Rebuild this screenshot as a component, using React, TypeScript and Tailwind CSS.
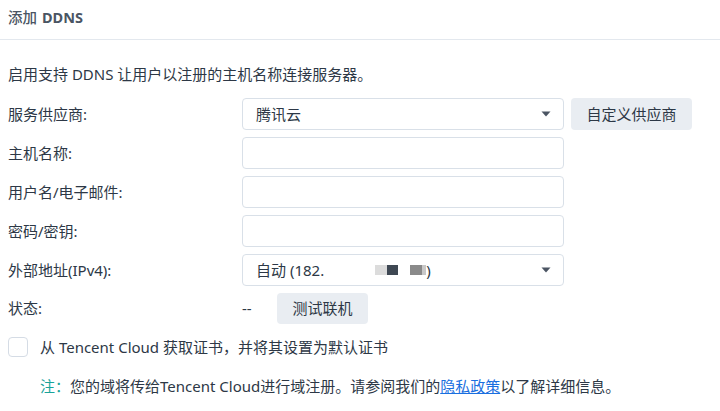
import React from "react";

const FONT = { fontFamily: '"Noto Sans", "Noto Sans CJK SC", sans-serif' };

function Caret() {
  return (
    <svg width="10" height="6" viewBox="0 0 10 6" className="shrink-0">
      <path d="M0.5 0.5 H9.5 L5 5.5 Z" fill="#4b5563" />
    </svg>
  );
}

function Input() {
  return <div className="h-[32px] w-[322px] rounded-[4px] border border-[#d9e0e8] bg-white" />;
}

function Row({ label, children }: { label: string; children: React.ReactNode }) {
  return (
    <div className="flex h-[32px] items-center">
      <div className="w-[234px] shrink-0 text-[15px] text-[#2d3846]">{label}</div>
      {children}
    </div>
  );
}

export default function App() {
  return (
    <div className="h-[411px] w-[720px] overflow-hidden bg-white text-[#2d3846]" style={FONT}>
      <div className="flex h-[40px] items-center border-b border-[#e3e8ee] px-2 pb-[3px] text-[14.5px] text-[#4a5563]">
        <span className="font-medium">添加</span>
        <span className="ml-[5px] font-bold">DDNS</span>
      </div>
      <div className="px-2">
        <div className="mt-[24px] text-[15px] leading-[20px]">启用支持 DDNS 让用户以注册的主机名称连接服务器。</div>
        <div className="mt-[14px] flex flex-col gap-[7px]">
          <Row label="服务供应商:">
            <div className="flex h-[32px] w-[322px] items-center justify-between rounded-[4px] border border-[#d9e0e8] bg-white pl-[13px] pr-[12px] text-[15px]">
              <span>腾讯云</span>
              <Caret />
            </div>
            <div className="ml-[7px] flex h-[32px] w-[121px] items-center justify-center rounded-[4px] bg-[#e9edf2] text-[15px]">
              自定义供应商
            </div>
          </Row>
          <Row label="主机名称:">
            <Input />
          </Row>
          <Row label="用户名/电子邮件:">
            <Input />
          </Row>
          <Row label="密码/密钥:">
            <Input />
          </Row>
          <Row label="外部地址(IPv4):">
            <div className="flex h-[32px] w-[322px] items-center justify-between rounded-[4px] border border-[#d9e0e8] bg-white pl-[13px] pr-[12px] text-[15px]">
              <span className="flex items-center">
                <span>自动 (182.</span>
                <span className="ml-[51px] inline-block h-[10px] w-[12px] bg-[#dcdcdc]" />
                <span className="inline-block h-[10px] w-[11px] bg-[#3e4853]" />
                <span className="ml-[12px] inline-block h-[10px] w-[12px] bg-[#8a8a8a]" />
                <span className="inline-block h-[10px] w-[4px] bg-[#c8c8c8]" />
                <span>)</span>
              </span>
              <Caret />
            </div>
          </Row>
          <div className="flex h-[31px] items-center">
            <div className="w-[234px] shrink-0 text-[15px]">状态:</div>
            <span className="w-[35px] text-[15px]">--</span>
            <div className="flex h-[31px] w-[91px] items-center justify-center rounded-[4px] bg-[#e9edf2] text-[15px]">
              测试联机
            </div>
          </div>
        </div>
        <div className="mt-[13px] flex h-[20px] items-center">
          <div className="h-[20px] w-[20px] rounded-[4px] border border-[#d5dce5] bg-white" />
          <span className="ml-[12px] text-[15px]">从 Tencent Cloud 获取证书，并将其设置为默认证书</span>
        </div>
        <div className="mt-[19px] pl-[32px] text-[15px] leading-[20px]">
          <span className="text-[#1aa39a]">注：</span>
          <span>您的域将传给Tencent Cloud进行域注册。请参阅我们的</span>
          <span className="text-[#1a6fe0] underline">隐私政策</span>
          <span>以了解详细信息。</span>
        </div>
      </div>
    </div>
  );
}
